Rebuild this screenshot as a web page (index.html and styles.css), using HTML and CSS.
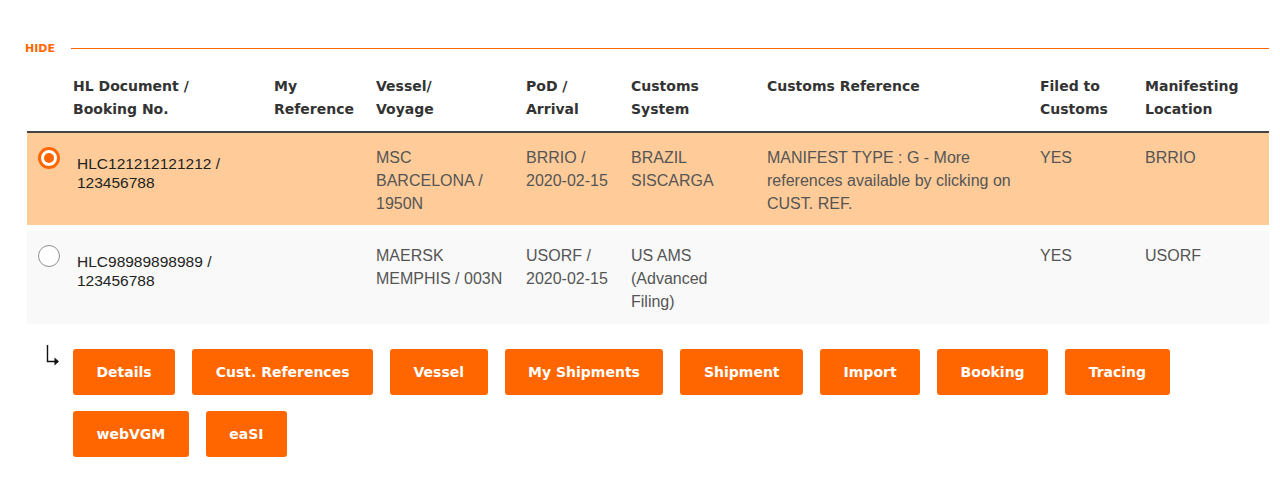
FILE: index.html
```html
<!DOCTYPE html>
<html lang="en">
<head>
<meta charset="utf-8">
<title>Shipments</title>
<link rel="stylesheet" href="styles.css">
</head>
<body>
<div class="hidebar">
  <span class="hide">HIDE</span>
  <span class="rule"></span>
</div>
<table class="grid">
  <colgroup>
    <col class="c-radio"><col class="c-doc"><col class="c-ref"><col class="c-vessel"><col class="c-pod"><col class="c-sys"><col class="c-cref"><col class="c-filed"><col class="c-loc">
  </colgroup>
  <thead>
    <tr>
      <th></th>
      <th>HL Document /<br>Booking No.</th>
      <th>My<br>Reference</th>
      <th>Vessel/<br>Voyage</th>
      <th>PoD /<br>Arrival</th>
      <th>Customs<br>System</th>
      <th>Customs Reference</th>
      <th>Filed to<br>Customs</th>
      <th>Manifesting<br>Location</th>
    </tr>
  </thead>
  <tbody>
    <tr class="sel">
      <td class="rcell"><span class="radio on"></span></td>
      <td><div class="doc">HLC121212121212 /<br>123456788</div></td>
      <td></td>
      <td>MSC<br>BARCELONA /<br>1950N</td>
      <td>BRRIO /<br>2020-02-15</td>
      <td>BRAZIL<br>SISCARGA</td>
      <td>MANIFEST TYPE : G - More<br>references available by clicking on<br>CUST. REF.</td>
      <td>YES</td>
      <td>BRRIO</td>
    </tr>
    <tr class="alt">
      <td class="rcell"><span class="radio"></span></td>
      <td><div class="doc">HLC98989898989 /<br>123456788</div></td>
      <td></td>
      <td>MAERSK<br>MEMPHIS / 003N</td>
      <td>USORF /<br>2020-02-15</td>
      <td>US AMS<br>(Advanced<br>Filing)</td>
      <td></td>
      <td>YES</td>
      <td>USORF</td>
    </tr>
  </tbody>
</table>
<div class="actions">
  <svg class="arrow" width="14" height="21" viewBox="0 0 14 21" aria-hidden="true">
    <path d="M1.5 0 V16.5 H9" fill="none" stroke="#111" stroke-width="1.4"/>
    <path d="M8.5 12.5 L13 16.5 L8.5 20.5 Z" fill="#111"/>
  </svg>
  <div class="buttons">
    <button class="btn">Details</button>
    <button class="btn">Cust. References</button>
    <button class="btn">Vessel</button>
    <button class="btn">My Shipments</button>
    <button class="btn">Shipment</button>
    <button class="btn">Import</button>
    <button class="btn">Booking</button>
    <button class="btn">Tracing</button>
    <button class="btn">webVGM</button>
    <button class="btn">eaSI</button>
  </div>
</div>
</body>
</html>
```
FILE: styles.css
```css
html, body {
  margin: 0;
  padding: 0;
  background: #fff;
}
body {
  font-family: "Liberation Sans", Arial, sans-serif;
  width: 1280px;
}
.hidebar {
  display: flex;
  align-items: center;
  gap: 16px;
  margin: 42px 11px 0 25px;
  height: 13px;
}
.hide {
  font-family: "DejaVu Sans", Verdana, sans-serif;
  font-weight: bold;
  font-size: 11px;
  line-height: 13px;
  color: #ff6600;
}
.rule {
  flex: 1;
  height: 1px;
  background: #ff6600;
}
.grid {
  margin: 7px 0 0 27px;
  width: 1242px;
  table-layout: fixed;
  border-collapse: collapse;
  border-spacing: 0;
}
.c-radio { width: 38px; }
.c-doc { width: 201px; }
.c-ref { width: 102px; }
.c-vessel { width: 150px; }
.c-pod { width: 105px; }
.c-sys { width: 136px; }
.c-cref { width: 273px; }
.c-filed { width: 105px; }
.c-loc { width: 132px; }
.grid th {
  font-family: "DejaVu Sans", Verdana, sans-serif;
  font-weight: bold;
  font-size: 14px;
  line-height: 23px;
  color: #333;
  text-align: left;
  vertical-align: top;
  padding: 13px 8px 10px;
  border-bottom: 2px solid #444;
  white-space: nowrap;
}
.grid td {
  font-size: 16px;
  line-height: 23px;
  color: #555;
  vertical-align: top;
  padding: 13px 8px 10px;
  white-space: nowrap;
}
.grid tr.sel td {
  background: #ffcc99;
}
.grid tr.alt td {
  background: #f9f9f9;
  border-top: 6px solid #fff;
  padding-bottom: 11px;
}
.grid td.rcell {
  padding-left: 11px;
  padding-right: 0;
}
.doc {
  padding: 8px 0 0 4px;
  font-size: 15.5px;
  line-height: 19px;
  color: #222;
}
.radio {
  display: flex;
  align-items: center;
  justify-content: center;
  box-sizing: border-box;
  width: 22px;
  height: 22px;
  margin-top: 1px;
  border-radius: 50%;
  border: 1.5px solid #8f8f8f;
  background: #fff;
}
.radio.on {
  border: 3.5px solid #ff6600;
}
.radio.on::after {
  content: "";
  width: 10px;
  height: 10px;
  border-radius: 50%;
  background: #ff6600;
}
.actions {
  display: flex;
  margin: 25px 11px 0 46px;
}
.arrow {
  flex: none;
  margin: -4px 13px 0 0;
}
.buttons {
  flex: 1;
  display: flex;
  flex-wrap: wrap;
  gap: 16px 17px;
}
.btn {
  height: 46px;
  padding: 0 23.5px;
  border: none;
  border-radius: 3px;
  background: #ff6600;
  color: #fff;
  font-family: "DejaVu Sans", Verdana, sans-serif;
  font-weight: bold;
  font-size: 14px;
  line-height: 46px;
  cursor: pointer;
}
```
